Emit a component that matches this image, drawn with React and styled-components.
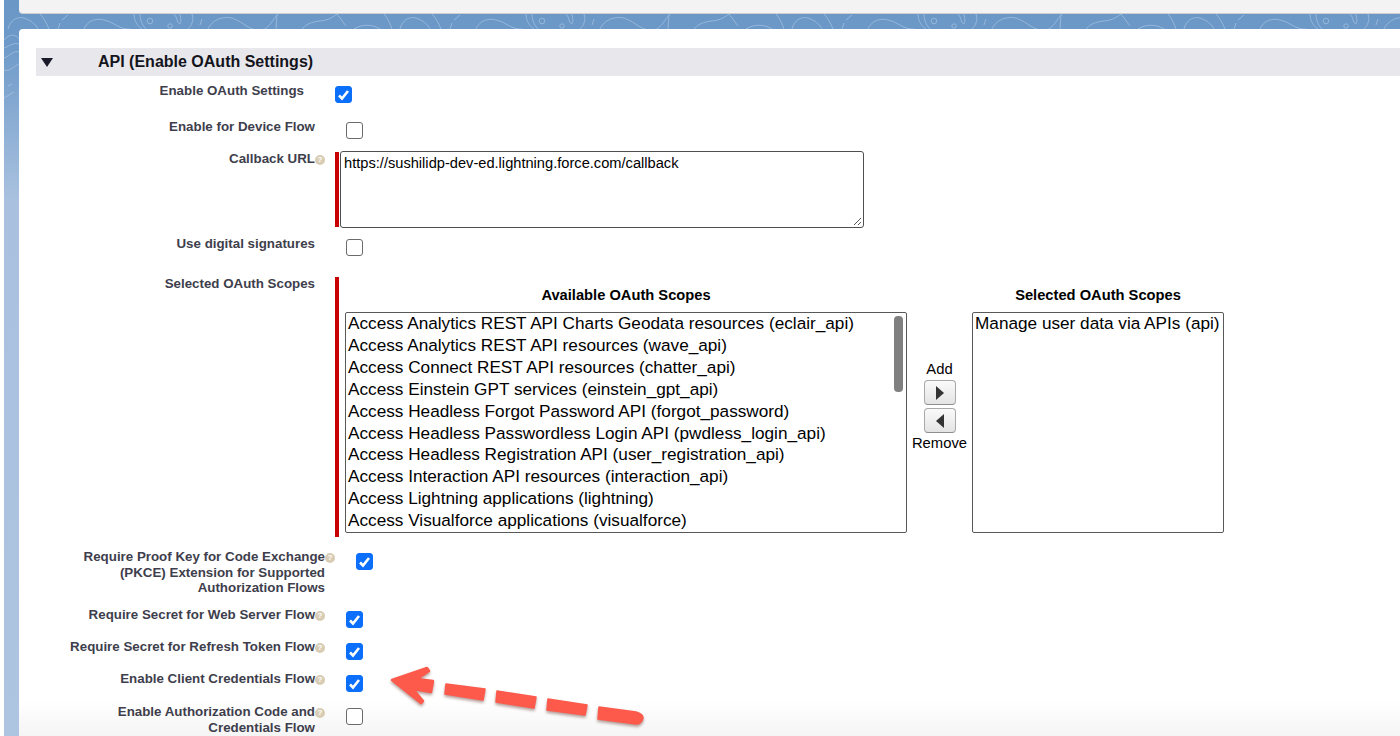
import React from 'react';
import styled, { createGlobalStyle } from 'styled-components';

const GlobalStyle = createGlobalStyle`
  html, body {
    background: #fff;
    margin: 0;
    overflow: hidden;
    padding: 0;
  }
`;

const Page = styled.div`
  background: linear-gradient(to bottom, #6a97c6 0, #6c99c8 40px, #a9c1df 200px, #aec5e1 100%);
  box-sizing: border-box;
  color: #000;
  display: flex;
  flex-flow: column;
  font-family: 'Liberation Sans', Arial, sans-serif;
  height: 100vh;
  margin-left: 4px;
  overflow: hidden;
  padding-left: 15px;
  position: relative;
`;

const Backdrop = styled.svg`
  height: 120px;
  left: 0;
  position: absolute;
  top: 0;
  width: 100%;
`;

const TopCard = styled.div`
  background: #f3f3f3;
  border-bottom: 1px solid #cfcfcf;
  border-bottom-left-radius: 4px;
  flex: none;
  height: 13px;
  position: relative;
`;

const MainCard = styled.div`
  background: linear-gradient(to bottom, #fff 0, #fff 671px, #f5f5f5 100%);
  border-top-left-radius: 4px;
  box-sizing: border-box;
  flex: 1;
  margin-top: 15px;
  min-height: 0;
  padding: 19px 0 0 17px;
  position: relative;
`;

const SectionHeader = styled.div`
  align-items: center;
  background: #e8e8ec;
  display: flex;
  height: 28px;
  margin-bottom: 7px;
`;

const Twist = styled.svg`
  flex: none;
  height: 9px;
  margin: 0 45px 0 5px;
  width: 12px;
`;

const SectionTitle = styled.h2`
  color: #14141c;
  font-size: 16px;
  font-weight: bold;
  margin: 0;
`;

const Row = styled.div`
  align-items: flex-start;
  display: flex;
  height: ${({ $height }) => $height}px;
`;

const Label = styled.div`
  align-items: flex-start;
  color: #3e3e4c;
  display: flex;
  flex: none;
  font-size: 13.33px;
  font-weight: bold;
  justify-content: flex-end;
  line-height: 15.5px;
  text-align: right;
  width: ${({ $width }) => $width || 289}px;
`;

const HintSlot = styled.span`
  display: flex;
  flex: none;
  justify-content: flex-end;
  padding-top: 4px;
  width: 10px;
`;

const Hint = styled.span`
  background: #d8cdb4;
  border-radius: 50%;
  color: #fff;
  display: block;
  font-size: 8px;
  height: 10px;
  line-height: 10px;
  text-align: center;
  width: 10px;
`;

const Box = styled.div`
  align-items: center;
  background: ${({ $checked }) => ($checked ? '#0b6ffb' : '#fff')};
  border: ${({ $checked }) => ($checked ? '1px solid #0b6ffb' : '1.5px solid #6b6b6b')};
  border-radius: 3px;
  box-sizing: border-box;
  display: flex;
  flex: none;
  height: 17px;
  justify-content: center;
  margin: ${({ $top }) => $top || 3}px 0 0 21px;
  width: 17px;
`;

const Required = styled.div`
  border-left: 4px solid #c80000;
  box-sizing: border-box;
  flex: none;
  height: ${({ $height }) => ($height ? `${$height}px` : 'auto')};
  margin: 1px 0 0 10px;
`;

const UrlBox = styled.div`
  background: #fff;
  border: 1px solid #4f4f4f;
  border-radius: 3px;
  box-sizing: border-box;
  font-size: 14.65px;
  height: 77px;
  line-height: 17px;
  margin: -1px 0 0 1px;
  padding: 3px;
  position: relative;
  width: 524px;
`;

const Grip = styled.svg`
  bottom: 1px;
  height: 10px;
  position: absolute;
  right: 1px;
  width: 10px;
`;

const ScopeGrid = styled.div`
  display: grid;
  grid-template-columns: 562px 65px 252px;
  padding: 11px 0 4px 6px;
`;

const ColumnTitle = styled.div`
  font-size: 14.7px;
  font-weight: bold;
  line-height: 15px;
  margin-bottom: 9px;
  text-align: center;
`;

const ScopeList = styled.div`
  background: #fff;
  border: 1px solid #595959;
  border-radius: 2px;
  box-sizing: border-box;
  font-size: 17.2px;
  height: 221px;
  line-height: 21.9px;
  overflow: hidden;
  padding: 0 2px;
  position: relative;
  white-space: nowrap;
`;

const ScrollThumb = styled.div`
  background: #808080;
  border-radius: 4px;
  height: 76px;
  position: absolute;
  right: 3px;
  top: 3px;
  width: 9px;
`;

const Mover = styled.div`
  align-items: center;
  display: flex;
  flex-flow: column;
  font-size: 14.8px;
  gap: 3px;
  line-height: 15px;
  padding-top: 74px;
`;

const MoveButton = styled.div`
  align-items: center;
  background: linear-gradient(to bottom, #fafafa, #e4e4e4);
  border: 1px solid #a9a9a9;
  border-bottom-color: #8e8e8e;
  border-radius: 4px;
  box-sizing: border-box;
  display: flex;
  height: 25px;
  justify-content: center;
  width: 32px;
`;

const Arrow = styled.svg`
  filter: drop-shadow(0 2px 1.5px rgba(90, 40, 30, 0.45));
  height: 736px;
  left: -4px;
  position: absolute;
  top: 0;
  width: 1400px;
`;

const availableScopes = [
  'Access Analytics REST API Charts Geodata resources (eclair_api)',
  'Access Analytics REST API resources (wave_api)',
  'Access Connect REST API resources (chatter_api)',
  'Access Einstein GPT services (einstein_gpt_api)',
  'Access Headless Forgot Password API (forgot_password)',
  'Access Headless Passwordless Login API (pwdless_login_api)',
  'Access Headless Registration API (user_registration_api)',
  'Access Interaction API resources (interaction_api)',
  'Access Lightning applications (lightning)',
  'Access Visualforce applications (visualforce)',
];

const Checkbox = ({ checked, top }) => (
  <Box $checked={checked} $top={top}>
    {checked && (
      <svg width="13" height="12" viewBox="0 0 13 12">
        <path d="M2 6.5 L5 9.5 L11 2" fill="none" stroke="#fff" strokeWidth="2.6" />
      </svg>
    )}
  </Box>
);

const FieldLabel = ({ width, hint, children }) => (
  <Label $width={width}>
    <span>{children}</span>
    <HintSlot>{hint && <Hint>?</Hint>}</HintSlot>
  </Label>
);

export default function App() {
  return (
    <>
      <GlobalStyle />
      <Page>
        <Backdrop>
          <defs>
            <pattern id="contours" width="392" height="120" patternUnits="userSpaceOnUse" x="-4">
              <g fill="none" stroke="#a9c4e2" strokeWidth="0.9" opacity="0.75">
                <path d="M8 29 C10 20 18 16 24 18 C30 20 36 24 38 29" />
                <path d="M40 14 C44 18 47 24 49 29" />
                <path d="M68 15 L62 20 M60 23 L58 29" />
                <path d="M84 29 C88 20 96 18 104 20 C114 22 120 30 130 29" />
                <path d="M134 14 C134 20 137 26 142 29 M140 14 C140 20 142 25 146 29" />
                <circle cx="150" cy="21" r="2.8" />
                <circle cx="170" cy="26" r="2.2" />
                <path d="M174 14 C178 18 176 22 180 24 C182 20 180 16 180 14" />
                <path d="M192 14 C194 20 192 25 188 29 M202 19 L200 25" />
                <path d="M208 29 C212 20 222 16 232 18 C244 22 250 32 262 30 C270 28 272 20 278 14" />
                <path d="M277 15 L276 29" />
                <path d="M302 29 C308 22 314 22 326 20 C332 18 334 16 337 14 L346 26" />
                <path d="M354 29 C362 24 372 24 380 29" />
                <path d="M384 14 C388 18 390 24 392 29" />
              </g>
              <g fill="none" stroke="#c2d4e8" strokeWidth="0.8" opacity="0.6">
                <path d="M4 40 C10 33 16 34 20 40 M4 48 C10 46 14 42 19 44 M4 58 C10 56 14 50 19 52" />
                <path d="M4 70 C10 72 14 66 19 64 M8 86 L12 84 M4 98 L14 92" />
              </g>
            </pattern>
          </defs>
          <rect width="100%" height="100%" fill="url(#contours)" />
        </Backdrop>

        <TopCard />

        <MainCard>
          <SectionHeader>
            <Twist viewBox="0 0 12 9">
              <path d="M0 0 H12 L6 9 Z" fill="#1a1a2a" />
            </Twist>
            <SectionTitle>API (Enable OAuth Settings)</SectionTitle>
          </SectionHeader>

          <Row $height={36}>
            <FieldLabel width={278}>Enable OAuth Settings</FieldLabel>
            <Checkbox checked />
          </Row>
          <Row $height={32}>
            <FieldLabel>Enable for Device Flow</FieldLabel>
            <Checkbox />
          </Row>
          <Row $height={85}>
            <FieldLabel hint>Callback URL</FieldLabel>
            <Required $height={75}>
              <UrlBox>
                https://sushilidp-dev-ed.lightning.force.com/callback
                <Grip viewBox="0 0 10 10">
                  <path d="M9 2 L2 9 M9 6 L6 9" stroke="#555" strokeWidth="1" />
                </Grip>
              </UrlBox>
            </Required>
          </Row>
          <Row $height={40}>
            <FieldLabel>Use digital signatures</FieldLabel>
            <Checkbox />
          </Row>
          <Row $height={273}>
            <FieldLabel>Selected OAuth Scopes</FieldLabel>
            <Required>
              <ScopeGrid>
                <div>
                  <ColumnTitle>Available OAuth Scopes</ColumnTitle>
                  <ScopeList>
                    {availableScopes.map((scope) => (
                      <div key={scope}>{scope}</div>
                    ))}
                    <ScrollThumb />
                  </ScopeList>
                </div>
                <Mover>
                  <span>Add</span>
                  <MoveButton>
                    <svg width="8" height="14" viewBox="0 0 8 14">
                      <path d="M0 0 L8 7 L0 14 Z" fill="#333" />
                    </svg>
                  </MoveButton>
                  <MoveButton>
                    <svg width="8" height="14" viewBox="0 0 8 14">
                      <path d="M8 0 L0 7 L8 14 Z" fill="#333" />
                    </svg>
                  </MoveButton>
                  <span>Remove</span>
                </Mover>
                <div>
                  <ColumnTitle>Selected OAuth Scopes</ColumnTitle>
                  <ScopeList>
                    <div>Manage user data via APIs (api)</div>
                  </ScopeList>
                </div>
              </ScopeGrid>
            </Required>
          </Row>
          <Row $height={58}>
            <FieldLabel width={299} hint>
              Require Proof Key for Code Exchange
              <br />
              (PKCE) Extension for Supported
              <br />
              Authorization Flows
            </FieldLabel>
            <Checkbox checked top={4} />
          </Row>
          <Row $height={32}>
            <FieldLabel hint>Require Secret for Web Server Flow</FieldLabel>
            <Checkbox checked top={4} />
          </Row>
          <Row $height={32}>
            <FieldLabel hint>Require Secret for Refresh Token Flow</FieldLabel>
            <Checkbox checked top={4} />
          </Row>
          <Row $height={33}>
            <FieldLabel hint>Enable Client Credentials Flow</FieldLabel>
            <Checkbox checked top={4} />
          </Row>
          <Row $height={32}>
            <FieldLabel hint>
              Enable Authorization Code and
              <br />
              Credentials Flow
            </FieldLabel>
            <Checkbox top={4} />
          </Row>
        </MainCard>

        <Arrow viewBox="0 0 1400 736">
          <g fill="#fd5a4c" stroke="#fd5a4c" strokeLinejoin="round" strokeWidth="1.5">
            <path d="M392 680 L427 668 L429 671 L417 679 L433 681 L431 692 L413 689 L423 701 L421 703 Z" strokeWidth="2.5" />
            <path d="M446 684 L485 689 L483 700 L445 694 Z" />
            <path d="M497 691 L536 697 L534 708 L496 702 Z" />
            <path d="M548 699 L587 705 L585 715 L547 710 Z" />
            <path d="M599 707 L636 712 C640 713 643 715 643 718 C642 722 640 724 636 724 L598 719 Z" />
          </g>
        </Arrow>
      </Page>
    </>
  );
}
